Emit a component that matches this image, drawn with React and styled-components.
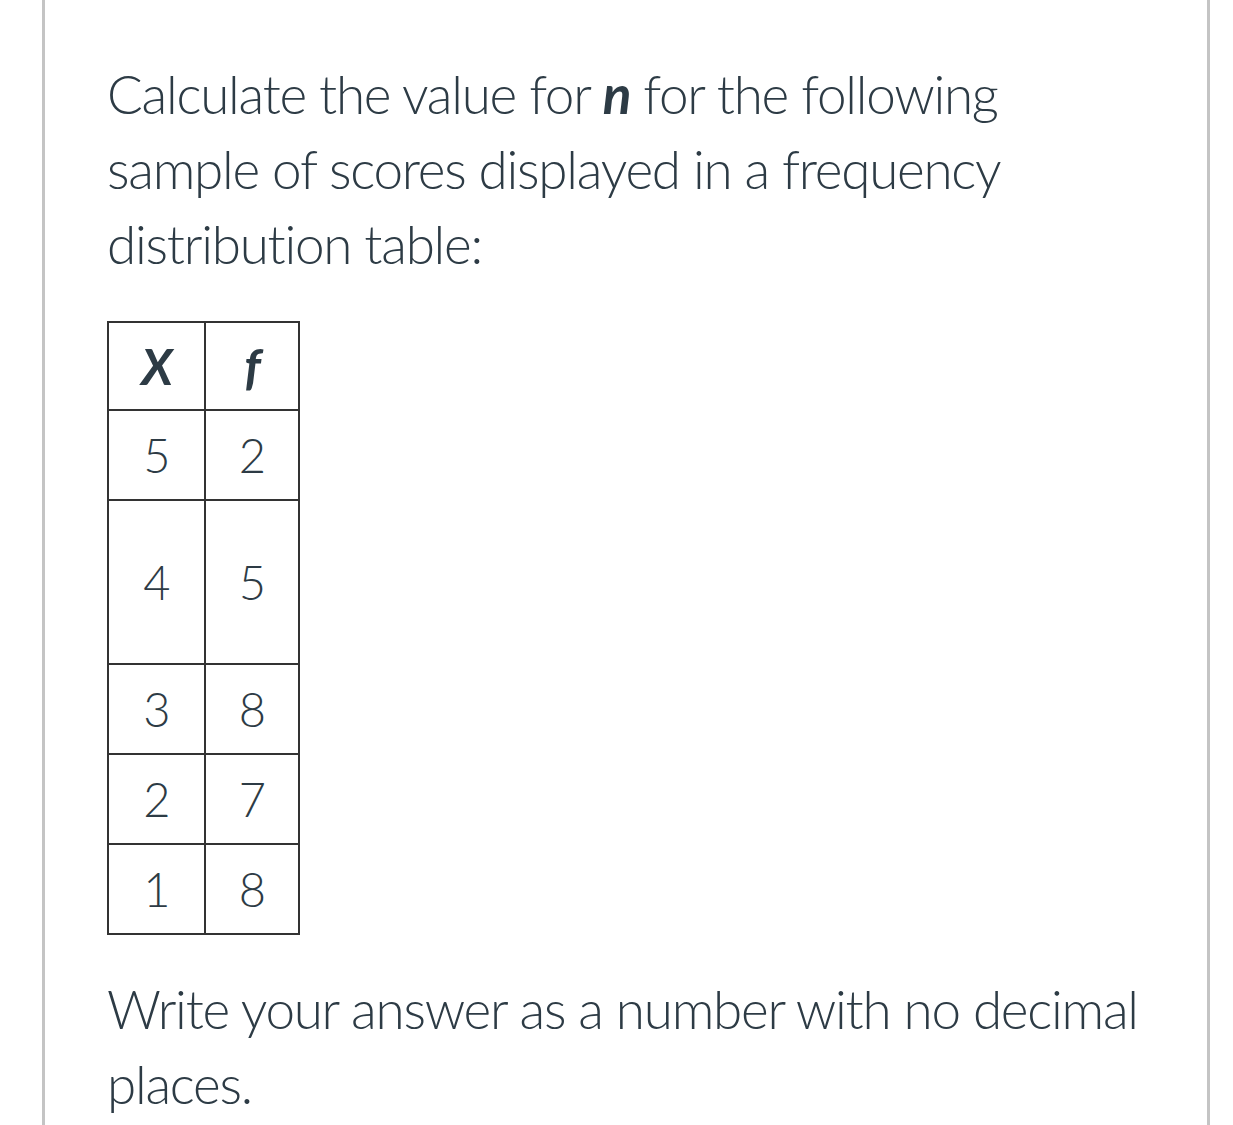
import React from 'react';
import styled, { createGlobalStyle } from 'styled-components';

const GlobalStyle = createGlobalStyle`
  html, body {
    margin: 0;
    padding: 0;
    background: #ffffff;
  }
`;

const Page = styled.div`
  width: 1233px;
  height: 1125px;
  overflow: hidden;
  background: #fff;
`;

const Panel = styled.div`
  margin-left: 42px;
  width: 1168px;
  min-height: 1125px;
  border-left: 3px solid #c4c4c4;
  border-right: 3px solid #c4c4c4;
  padding: 56px 0 0 62px;
  box-sizing: border-box;
  font-family: Lato, "Open Sans", sans-serif;
  font-weight: 300;
  color: #2d3b45;
`;

const Para = styled.p`
  margin: 0;
  font-size: 53px;
  line-height: 75px;
  letter-spacing: -1.25px;
  width: 1040px;
`;

const Strong = styled.b`
  font-weight: 700;
  font-style: italic;
`;

const Table = styled.table`
  border-collapse: collapse;
  margin: ${p => p.$top}px 0 ${p => p.$bottom}px 0;
  border: 2px solid #333;
`;

const Cell = styled.td`
  border: 2px solid #333;
  width: ${p => p.$w}px;
  height: ${p => p.$h}px;
  padding: 0;
  text-align: center;
  vertical-align: middle;
  font-size: 47px;
  font-weight: 300;
  letter-spacing: -1px;
  ${p => p.$head && 'font-style: italic; font-weight: 700; font-size: 50px;'}
`;

const rows = [
  ['5', '2', 88],
  ['4', '5', 162],
  ['3', '8', 88],
  ['2', '7', 88],
  ['1', '8', 88],
];

export default function App() {
  return (
    <Page>
      <GlobalStyle />
      <Panel>
        <Para>
          Calculate the value for <Strong>n</Strong> for the following sample of scores displayed in a frequency distribution table:
        </Para>
        <Table $top={40} $bottom={36}>
          <tbody>
            <tr>
              <Cell $head $w={95} $h={86}>X</Cell>
              <Cell $head $w={92} $h={86}>f</Cell>
            </tr>
            {rows.map(([x, f, h]) => (
              <tr key={x}>
                <Cell $w={95} $h={h}>{x}</Cell>
                <Cell $w={92} $h={h}>{f}</Cell>
              </tr>
            ))}
          </tbody>
        </Table>
        <Para>Write your answer as a number with no decimal places.</Para>
      </Panel>
    </Page>
  );
}
